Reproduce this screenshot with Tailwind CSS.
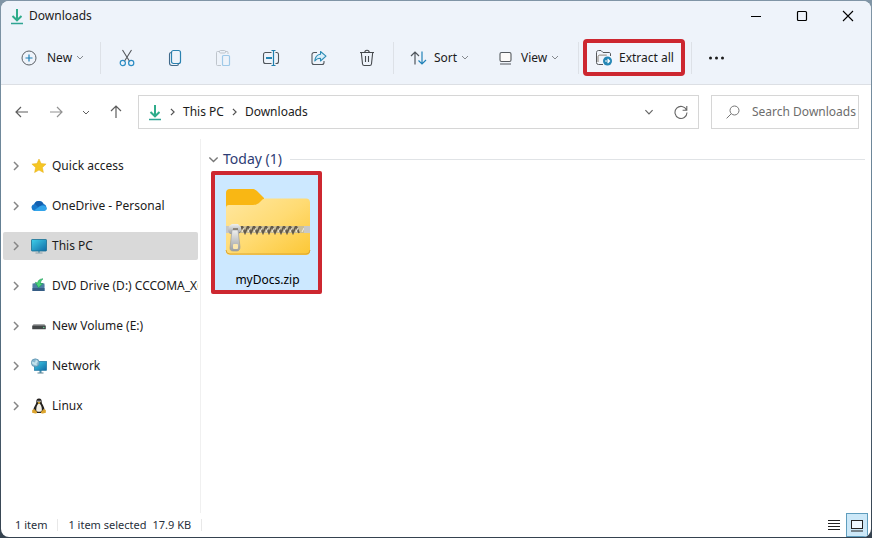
<!DOCTYPE html>
<html lang="en">
<head>
<meta charset="utf-8">
<meta name="viewport" content="width=device-width, initial-scale=1">
<title>Downloads</title>
<script src="https://cdn.jsdelivr.net/npm/@tailwindcss/browser@4"></script>
</head>
<body class="h-screen overflow-hidden bg-linear-to-b from-[#8095a6] via-[#5f7c90] to-[#35424f] p-px font-['Noto_Sans','Open_Sans',sans-serif] text-[12px] leading-4 text-[#1b1b1b]">
<svg width="0" height="0" class="absolute" aria-hidden="true">
  <defs>
    <symbol id="down" viewBox="0 0 8 5"><path d="M1 1l3 3 3-3" fill="none" stroke="currentColor"/></symbol>
    <symbol id="right" viewBox="0 0 6 10"><path d="M1 1l4 4-4 4" fill="none" stroke="currentColor" stroke-width="1.5"/></symbol>
    <symbol id="download" viewBox="0 0 14 17"><path d="M7 1v11M2.500 8L7 12.300 11.500 8" fill="none" stroke="#2fac8b" stroke-width="2"/><path d="M1 15.500h12" stroke="#2fa493" stroke-width="1.700"/></symbol>
  </defs>
</svg>
<div class="flex h-full flex-col overflow-hidden rounded-lg bg-white">
  <header class="border-b border-[#dcdfe4] bg-[#eef3fa]">
    <div class="flex h-[30px] items-center pl-[9px]">
      <svg class="h-[17px] w-[14px]"><use href="#download"/></svg>
      <h1 class="ml-[5px]">Downloads</h1>
      <div class="ml-auto flex text-black">
        <button aria-label="Minimize" class="grid h-7 w-[46px] place-items-center"><svg class="size-3" viewBox="0 0 12 12"><path d="M1 6.500h10" stroke="currentColor"/></svg></button>
        <button aria-label="Maximize" class="grid h-7 w-[46px] place-items-center"><svg class="size-3" viewBox="0 0 12 12"><rect x="1.500" y="1.500" width="9" height="9" rx="1" fill="none" stroke="currentColor" stroke-width="1.200"/></svg></button>
        <button aria-label="Close" class="grid h-7 w-[46px] place-items-center"><svg class="size-3" viewBox="0 0 12 12"><path d="M1 1l10 10M11 1L1 11" stroke="currentColor" stroke-width="1.100"/></svg></button>
      </div>
    </div>
    <div class="flex h-[53px] items-center" role="toolbar" aria-label="Commands">
      <button class="ml-5 flex h-8 w-[71px] items-center">
        <svg class="size-4" viewBox="0 0 16 16" fill="none"><circle cx="8" cy="8" r="7" stroke="#5b6066"/><path d="M8 4.500v7M4.500 8h7" stroke="#1f7fb5" stroke-width="1.200"/></svg>
        <span class="ml-2.5">New</span>
        <svg class="ml-1 h-[5px] w-2 text-[#85898e]"><use href="#down"/></svg>
      </button>
      <span class="ml-2 h-8 w-px bg-[#dde1e7]"></span>
      <div class="ml-0.5 flex">
        <button aria-label="Cut" class="grid size-12 place-items-center"><svg class="h-[18px] w-4" viewBox="0 0 16 18" fill="none"><path d="M3.500 1l7.200 11.500M12.500 1L5.300 12.500" stroke="#55585c" stroke-width="1.100"/><circle cx="3.800" cy="14" r="2.600" stroke="#2b8cc4" stroke-width="1.200"/><circle cx="12.200" cy="14" r="2.600" stroke="#2b8cc4" stroke-width="1.200"/></svg></button>
        <button aria-label="Copy" class="grid size-12 place-items-center"><svg class="h-[18px] w-4" viewBox="0 0 16 18" fill="none"><rect x="4.500" y="1.500" width="9" height="13" rx="2" stroke="#2b82b0" stroke-width="1.200"/><path d="M4.500 3.500C3 3.500 2.500 4 2.500 5v9c0 1.700.8 2.500 2.500 2.500h5c1 0 1.500-.5 1.500-2" stroke="#41698a" stroke-width="1.100"/></svg></button>
        <button aria-label="Paste" disabled class="grid size-12 place-items-center"><svg class="h-[18px] w-4" viewBox="0 0 16 18" fill="none"><path d="M5 2.500H2.500c-.7 0-1 .3-1 1v12c0 .7.3 1 1 1H6M10 2.500h2c.7 0 1 .3 1 1V5" stroke="#bfc5cc"/><rect x="4.500" y="1.500" width="6" height="2.500" rx="1" stroke="#bfc5cc"/><rect x="7.500" y="6.500" width="7" height="10" rx="1" stroke="#9fc9e8" stroke-width="1.200"/></svg></button>
        <button aria-label="Rename" class="grid size-12 place-items-center"><svg class="h-[18px] w-[18px]" viewBox="0 0 18 18" fill="none"><path d="M9.500 3.500h-6a2 2 0 00-2 2v7a2 2 0 002 2h6M13.500 3.500h1a2 2 0 012 2v7a2 2 0 01-2 2h-1" stroke="#50565c" stroke-width="1.100"/><path d="M11.500 1.500v15M9.500 1.500h4M9.500 16.500h4" stroke="#1f7fae" stroke-width="1.200"/><path d="M4 9h6" stroke="#2586b3" stroke-width="2"/></svg></button>
        <button aria-label="Share" class="grid size-12 place-items-center"><svg class="h-[18px] w-4" viewBox="0 0 16 18" fill="none"><path d="M6 3.500H3a2 2 0 00-2 2v8a2 2 0 002 2h8a2 2 0 002-2V12" stroke="#50565c" stroke-width="1.100"/><path d="M9.500 2.500L15 7.200 9.500 12V9.300C7 9.300 5.300 10 3.800 12c.3-3.800 2.200-6.300 5.700-6.700z" fill="#d9eefa" stroke="#2b8cb5" stroke-width="1.100" stroke-linejoin="round"/></svg></button>
        <button aria-label="Delete" class="grid size-12 place-items-center"><svg class="h-[18px] w-4" viewBox="0 0 16 18" fill="none" stroke="#45494d" stroke-width="1.100"><path d="M1 3.500h14M5.800 3.500c0-3 4.400-3 4.400 0M2.300 3.500l1.200 11.300c.1 1.100.7 1.700 1.800 1.700h5.400c1.100 0 1.700-.6 1.800-1.700l1.200-11.300M6.500 7v6M9.500 7v6"/></svg></button>
      </div>
      <span class="ml-0.5 h-8 w-px bg-[#dde1e7]"></span>
      <button class="ml-4 flex h-8 w-[72px] items-center">
        <svg class="h-4 w-[17px]" viewBox="0 0 17 16" fill="none"><path d="M5 14.500V2M1 6l4-4 4 4" stroke="#50565c" stroke-width="1.200"/><path d="M12 1.500V14M8.500 10.500L12 14l4-4" stroke="#2182b8" stroke-width="1.200"/></svg>
        <span class="ml-[7px]">Sort</span>
        <svg class="ml-1 h-[5px] w-2 text-[#85898e]"><use href="#down"/></svg>
      </button>
      <button class="ml-4 flex h-8 w-[72px] items-center">
        <svg class="h-4 w-[15px]" viewBox="0 0 15 16" fill="none" stroke="#55595e"><rect x="2" y="2.500" width="11" height="9" rx="1.500" fill="#fcfaf9" stroke-width="1.100"/><path d="M2 14h11" stroke-width="1.200"/></svg>
        <span class="ml-2">View</span>
        <svg class="ml-1 h-[5px] w-2 text-[#85898e]"><use href="#down"/></svg>
      </button>
      <span class="ml-2 h-8 w-px bg-[#dde1e7]"></span>
      <button class="ml-1 flex h-[37px] w-[102px] items-center rounded-sm border-4 border-[#cd2730] bg-[#f1f5fc] pl-2 whitespace-nowrap">
        <svg class="h-[18px] w-[18px] shrink-0" viewBox="0 0 18 18" fill="none"><path d="M8 15.500H3.500a2 2 0 01-2-2v-10c0-1.200.8-2 2-2H6L8 3.500h6c1 0 1.500.6 1.500 1.500v2" stroke="#55585c"/><path d="M3 13V8c0-1.200.6-1.900 1.800-1.900h7" stroke="#8b8378"/><circle cx="12.500" cy="12" r="4.500" fill="#2486b5"/><path d="M10 12h4.500M12.600 10l2 2-2 2" stroke="#fff" stroke-width="1.100"/></svg>
        <span class="ml-1.5">Extract all</span>
      </button>
      <span class="ml-1.5 h-8 w-px bg-[#dde1e7]"></span>
      <button aria-label="See more" class="ml-2 grid size-8 place-items-center"><svg class="h-1 w-[17px]" viewBox="0 0 17 4" fill="#1b1b1b"><circle cx="2.500" cy="2" r="1.500"/><circle cx="8.500" cy="2" r="1.500"/><circle cx="14.500" cy="2" r="1.500"/></svg></button>
    </div>
  </header>

  <div class="flex h-[54px] shrink-0 items-center pr-3 pl-[5px] text-[#5e5e5e]">
    <button aria-label="Back" class="grid h-8 w-8 place-items-center"><svg class="size-3.5" viewBox="0 0 14 14" fill="none" stroke="currentColor" stroke-width="1.200"><path d="M13 7H1M6 2L1 7l5 5"/></svg></button>
    <button aria-label="Forward" class="ml-0.5 grid h-8 w-8 place-items-center text-[#929292]"><svg class="size-3.5" viewBox="0 0 14 14" fill="none" stroke="currentColor" stroke-width="1.200"><path d="M1 7h12M8 2l5 5-5 5"/></svg></button>
    <button aria-label="Recent locations" class="grid h-8 w-7 place-items-center"><svg class="h-[5px] w-2"><use href="#down"/></svg></button>
    <button aria-label="Up" class="grid h-8 w-8 place-items-center"><svg class="size-3.5" viewBox="0 0 14 14" fill="none" stroke="currentColor" stroke-width="1.200"><path d="M7 13V1M2 6l5-5 5 5"/></svg></button>
    <nav aria-label="Address" class="ml-1.5 flex h-[34px] flex-1 items-center border border-[#d6d6d6] pl-[9px] text-[#1b1b1b]">
      <svg class="h-[17px] w-[14px]"><use href="#download"/></svg>
      <svg class="ml-2 h-2 w-[5px] text-[#555]"><use href="#right"/></svg>
      <a href="#" class="ml-2">This PC</a>
      <svg class="ml-2 h-2 w-[5px] text-[#555]"><use href="#right"/></svg>
      <a href="#" class="ml-2">Downloads</a>
      <button aria-label="Previous locations" class="ml-auto grid h-8 w-8 place-items-center text-[#666]"><svg class="h-1.5 w-2.5"><use href="#down"/></svg></button>
      <button aria-label="Refresh" class="mr-px grid h-8 w-8 place-items-center text-[#666]"><svg class="size-3.5" viewBox="0 0 14 14" fill="none" stroke="currentColor" stroke-width="1.100"><path d="M12.500 5A6 6 0 1013 7.500M12.800 1v4.200H8.600"/></svg></button>
    </nav>
    <label class="ml-3 flex h-[34px] w-[148px] items-center border border-[#d6d6d6] pl-3.5">
      <svg class="size-3.5 shrink-0" viewBox="0 0 14 14" fill="none" stroke="#757575"><circle cx="8.500" cy="5.500" r="4.500"/><path d="M5.300 8.700L.6 13.400"/></svg>
      <input type="text" aria-label="Search Downloads" placeholder="Search Downloads" class="ml-3 w-full min-w-0 outline-none placeholder:text-[#6d6d6d]">
    </label>
  </div>

  <div class="flex min-h-0 flex-1">
    <nav aria-label="Folders" class="flex w-[200px] shrink-0 flex-col gap-3 border-r border-[#f0f0f0] pt-[13px] pr-0.5 pl-0.5 whitespace-nowrap">
      <a href="#" class="flex h-7 shrink-0 items-center overflow-hidden rounded-xs pl-2.5"><svg class="h-2.5 w-1.5 shrink-0 text-[#858585]"><use href="#right"/></svg>
        <svg class="ml-3 size-4 shrink-0" viewBox="0 0 16 16"><path d="M8 1l2.100 4.500 5 .6-3.700 3.400 1 5L8 12.100l-4.400 2.400 1-5L.9 6.100l5-.6z" fill="#f5c623" stroke="#e6ae18" stroke-width=".5"/></svg><span class="ml-[5px]">Quick access</span></a>
      <a href="#" class="flex h-7 shrink-0 items-center overflow-hidden rounded-xs pl-2.5"><svg class="h-2.5 w-1.5 shrink-0 text-[#858585]"><use href="#right"/></svg>
        <svg class="ml-3 size-4 shrink-0" viewBox="0 0 16 16"><path d="M3.500 13A3.500 3.500 0 013 6.200 5.200 5.200 0 0112.600 6 3.600 3.600 0 0112.500 13z" fill="#1879cc"/><path d="M3.500 5.600A5.200 5.200 0 0112.600 6L7 9z" fill="#135fae"/><path d="M2.500 12.800L9 8.300c3-1.500 5.900-.6 6.800 1.700.4 1.600-1 3-3 3H4z" fill="#32a4ea"/></svg><span class="ml-[5px]">OneDrive - Personal</span></a>
      <a href="#" aria-current="page" class="flex h-7 shrink-0 items-center overflow-hidden rounded-xs bg-[#d9d9d9] pl-2.5"><svg class="h-2.5 w-1.5 shrink-0 text-[#858585]"><use href="#right"/></svg>
        <svg class="ml-3 size-4 shrink-0" viewBox="0 0 16 16"><defs><linearGradient id="screen" x2="1" y2="1"><stop stop-color="#3fd0ea"/><stop offset="1" stop-color="#116aa5"/></linearGradient></defs><path d="M7 13h2v2H7z" fill="#7faebf"/><path d="M4.500 15h7" stroke="#8aa0aa"/><rect x=".5" y="1.500" width="15" height="11.500" rx=".6" fill="url(#screen)" stroke="#1b6f92" stroke-width=".8"/></svg><span class="ml-[5px]">This PC</span></a>
      <a href="#" class="flex h-7 shrink-0 items-center overflow-hidden rounded-xs pl-2.5"><svg class="h-2.5 w-1.5 shrink-0 text-[#858585]"><use href="#right"/></svg>
        <svg class="ml-3 size-4 shrink-0" viewBox="0 0 16 16"><path d="M3 5h9.500l1 3.500h-12z" fill="#98a7b6"/><path d="M1.500 5.500h12V13h-12z" fill="#4f7ea5"/><path d="M1.500 10h12v3h-12z" fill="#365d85"/><path d="M12 .8C8.500 1 7 2.500 6.700 5L4.300 4.300 7.500 9.800l4.300-4.200-2.300-.2C9.500 3.500 10.300 2 12 .8z" fill="#4bd477" stroke="#159a58" stroke-width=".6"/></svg><span class="ml-[5px]">DVD Drive (D:) CCCOMA_X64</span></a>
      <a href="#" class="flex h-7 shrink-0 items-center overflow-hidden rounded-xs pl-2.5"><svg class="h-2.5 w-1.5 shrink-0 text-[#858585]"><use href="#right"/></svg>
        <svg class="ml-3 size-4 shrink-0" viewBox="0 0 16 16"><path d="M2.500 6h11l1 2h-13z" fill="#a5a7a8"/><rect x="1.200" y="7.600" width="13.600" height="3.600" rx=".5" fill="#434748"/><circle cx="12.800" cy="9.500" r=".7" fill="#69dc99"/></svg><span class="ml-[5px]">New Volume (E:)</span></a>
      <a href="#" class="flex h-7 shrink-0 items-center overflow-hidden rounded-xs pl-2.5"><svg class="h-2.5 w-1.5 shrink-0 text-[#858585]"><use href="#right"/></svg>
        <svg class="ml-3 size-4 shrink-0" viewBox="0 0 16 16"><path d="M8.500 12h2v3h-2z" fill="#4a91af"/><path d="M6.500 15h6" stroke="#5d8292"/><rect x="3.500" y="3.500" width="12" height="8.800" fill="url(#screen)" stroke="#1674a1" stroke-width=".7"/><circle cx="4.300" cy="4.800" r="4" fill="#87b6cf" stroke="#437f9f" stroke-width=".5"/><path d="M1 3.500l3 1 1-3 2 2-1.500 2 .5 2-3-.8L1.300 6" fill="#c4e3ec"/></svg><span class="ml-[5px]">Network</span></a>
      <a href="#" class="flex h-7 shrink-0 items-center overflow-hidden rounded-xs pl-2.5"><svg class="h-2.5 w-1.5 shrink-0 text-[#858585]"><use href="#right"/></svg>
        <svg class="ml-3 size-4 shrink-0" viewBox="0 0 16 16"><path d="M8 .5c2.200 0 2.800 1.500 2.700 3.600 0 2 3 4.700 2.800 8.400L11 15H5l-2.500-2.500C2.300 9 5.300 6.500 5.300 4.200 5.200 2 5.800.5 8 .5z" fill="#24211f"/><path d="M8 5.500c1.700 0 3.200 4 2.800 7-.3 1.700-5.200 1.700-5.500 0C5 9.500 6.300 5.500 8 5.500z" fill="#f3f0e6"/><circle cx="7" cy="3.200" r=".7" fill="#fff"/><circle cx="9" cy="3.200" r=".7" fill="#fff"/><path d="M6.500 4.600L8 4l1.500.6L8 6z" fill="#eeb52c"/><path d="M1.200 12l2-1 2.900 3c0 1.200-1 1.700-2 1.500l-3-.8zM14.800 12l-2-1-2.900 3c0 1.200 1 1.700 2 1.500l3-.8z" fill="#dca42e"/></svg><span class="ml-[5px]">Linux</span></a>
    </nav>
    <main class="min-w-0 flex-1 pt-2.5 pr-1.5 pl-[7px]">
      <h2 class="flex h-5 items-center text-[14px] leading-5 text-[#2e3d75]">
        <button class="flex items-center"><svg class="h-[7px] w-[11px] text-[#777]"><use href="#down"/></svg><span class="ml-1">Today (1)</span></button>
        <span class="ml-2 h-px flex-1 bg-[#e0e3e6]"></span>
      </h2>
      <button class="mt-0.5 ml-[3px] flex h-[123px] w-[111px] flex-col items-center rounded-xs border-4 border-[#cd2730] bg-[#cce8ff] pt-[13px] pl-0.5">
        <svg class="h-[68px] w-[86px]" viewBox="0 0 86 68" aria-hidden="true">
          <defs>
            <linearGradient id="folder" x2="1" y2="1"><stop stop-color="#ffe7a0"/><stop offset=".5" stop-color="#ffdb73"/><stop offset="1" stop-color="#fcc735"/></linearGradient>
            <linearGradient id="metal" x2="0" y2="1"><stop stop-color="#f0f0ef"/><stop offset="1" stop-color="#9b9ea1"/></linearGradient>
          </defs>
          <path d="M1 5a4 4 0 014-4h22c3 0 4 1 6 3l6 6v12H1z" fill="#f9b714"/>
          <path d="M1 20c0-2 1-3 3-3h24c3 0 5-1 7-3l2-2c1-1 2-1.500 4-1.500h40a4 4 0 014 4V63a4 4 0 01-4 4H5a4 4 0 01-4-4z" fill="url(#folder)"/>
          <path d="M1 62a4 4 0 004 4h76a4 4 0 004-4" fill="none" stroke="#dca634"/>
          <path d="M1 38h84v7H1z" fill="#c9bd97"/>
          <path d="M14 45l2.500-6h1l2.500 6 2.500-6h1l2.500 6 2.500-6h1l2.500 6 2.500-6h1l2.500 6 2.500-6h1l2.500 6 2.500-6h1l2.500 6 2.500-6h1l2.500 6 2.500-6h1l2.500 6 2.500-6h1l2.500 6 2.500-6h1l2.500 6" fill="none" stroke="#62594b" stroke-width="1.800"/>
          <path d="M17 44l2-4M23 44l2-4M29 44l2-4M35 44l2-4M41 44l2-4M47 44l2-4M53 44l2-4M59 44l2-4M65 44l2-4M71 44l2-4M77 44l2-4" stroke="#f5eee0"/>
          <path d="M1 38h3v7H1zM79 38h6v7h-6z" fill="#c7c8c8"/>
          <path d="M4 38l3-2h6l3 3v4l-3 3H5l-2-3z" fill="url(#metal)"/>
          <path d="M7 42h6l2 17c0 2-1 4-3 4H8c-2 0-3-1-3-3z" fill="url(#metal)" stroke="#96979a" stroke-width=".6"/>
          <rect x="8" y="56" width="5" height="5" rx="1" fill="#fbe7ae"/><path d="M8 41h5" stroke="#786f65" stroke-width="1.500"/>
        </svg>
        <span class="mt-4 text-black">myDocs.zip</span>
      </button>
    </main>
  </div>

  <footer class="flex h-6 shrink-0 items-center pl-3.5 text-[11px] text-[#28303c]">
    <span>1 item</span>
    <span class="ml-2.5 h-3 w-px bg-[#e8e8e8]"></span>
    <span class="ml-2.5">1 item selected</span>
    <span class="ml-1.5">17.9 KB</span>
    <span class="ml-2.5 h-3 w-px bg-[#e8e8e8]"></span>
    <button aria-label="Details view" class="ml-auto grid h-6 w-6 place-items-center"><svg class="h-3 w-3" viewBox="0 0 12 12"><path d="M0 1.500h12M0 4.500h12M0 7.500h12M0 10.500h12" stroke="#222"/></svg></button>
    <button aria-label="Large icons view" aria-pressed="true" class="mr-[3px] grid h-6 w-[22px] place-items-center border border-[#5f9dbd] bg-[#cce8f8]"><svg class="h-[13px] w-3" viewBox="0 0 12 13"><rect x=".5" y="1.500" width="11" height="8" fill="#eef8ff" stroke="#222"/><path d="M0 12h12" stroke="#222"/></svg></button>
  </footer>
</div>
</body>
</html>
